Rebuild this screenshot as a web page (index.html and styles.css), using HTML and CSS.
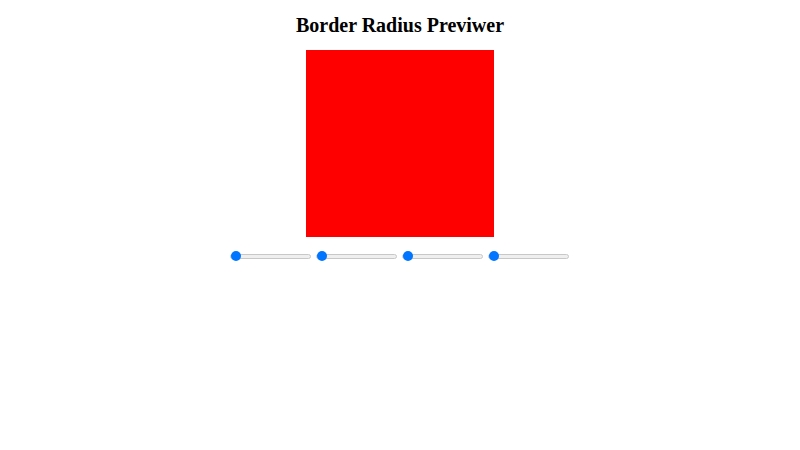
FILE: index.html
```html
<!DOCTYPE html>
<html>
<head>
<meta charset="utf-8">
<link rel="stylesheet" href="styles.css">
</head>
<body>
<div class="app">
  <h1 class="title">Border Radius Previwer</h1>
  <div class="box"></div>
  <div class="controls">
    <input class="slider" type="range" min="0" max="100" value="0">
    <input class="slider" type="range" min="0" max="100" value="0">
    <input class="slider" type="range" min="0" max="100" value="0">
    <input class="slider" type="range" min="0" max="100" value="0">
  </div>
</div>
</body>
</html>
```
FILE: styles.css
```css
html, body {
  margin: 0;
  padding: 0;
  background: #fff;
}
.app {
  display: flex;
  flex-direction: column;
  align-items: center;
  padding-top: 13px;
  font-family: "Liberation Serif", "Times New Roman", serif;
}
.title {
  margin: 0 0 13px;
  font-size: 20px;
  font-weight: bold;
  line-height: 24px;
  color: #000;
}
.box {
  width: 188px;
  height: 187px;
  background: #ff0000;
}
.controls {
  display: flex;
  gap: 5px;
  margin-top: 14px;
  margin-right: 2px;
}
.slider {
  -webkit-appearance: none;
  appearance: none;
  width: 81px;
  height: 10px;
  margin: 0;
  padding: 0;
  background: transparent;
}
.slider::-webkit-slider-runnable-track {
  height: 5px;
  box-sizing: border-box;
  background: #efefef;
  border: 1px solid #c8c8c8;
  border-radius: 3px;
}
.slider::-webkit-slider-thumb {
  -webkit-appearance: none;
  appearance: none;
  width: 10px;
  height: 10px;
  margin-top: -3.5px;
  border: none;
  border-radius: 50%;
  background: #0075ff;
}
```
